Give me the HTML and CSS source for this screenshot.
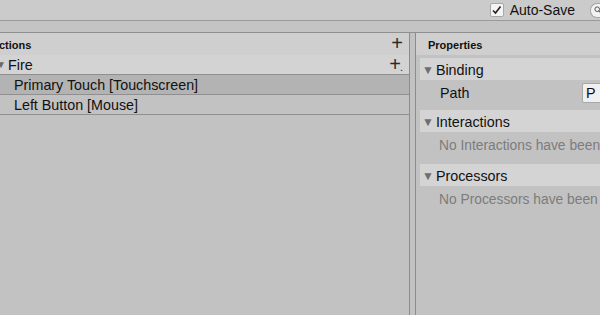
FILE: index.html
```html
<!DOCTYPE html>
<html lang="en">
<head>
  <meta charset="UTF-8" />
  <title>Input Actions</title>
  <link rel="stylesheet" href="styles.css">
</head>
<body>
  <div class="toolbar">
    <label class="autosave">
      <span class="check">
        <svg width="11" height="11" viewBox="0 0 11 11"><path d="M2 5.5 L4.5 8 L9.5 1.5" fill="none" stroke="#222" stroke-width="1.6"/></svg>
      </span>
      Auto-Save
    </label>
    <div class="search">
      <svg width="8" height="8" viewBox="0 0 8 8"><circle cx="3.2" cy="3.2" r="2.3" fill="none" stroke="#555" stroke-width="1"/><path d="M5 5 L7 7" stroke="#555" stroke-width="1.2"/></svg>
    </div>
  </div>
  <div class="strip"></div>

  <div class="main">
    <div class="actions-panel">
      <div class="panel-header">
        <span class="title shifted">Actions</span>
        <span class="plus">+</span>
      </div>
      <div class="action-row">
        <span class="fold">&#9660;</span>
        <span class="name">Fire</span>
        <span class="plus">+<small>.</small></span>
      </div>
      <div class="binding-row selected">Primary Touch [Touchscreen]</div>
      <div class="binding-row">Left Button [Mouse]</div>
    </div>

    <div class="splitter"></div>

    <div class="props-panel">
      <div class="panel-header">
        <span class="title">Properties</span>
      </div>
      <div class="foldout">
        <span class="fold">&#9660;</span> Binding
      </div>
      <div class="prop-row">
        <span class="prop-label">Path</span>
        <span class="prop-field">P</span>
      </div>
      <div class="foldout">
        <span class="fold">&#9660;</span> Interactions
      </div>
      <div class="hint">No Interactions have been added.</div>
      <div class="foldout">
        <span class="fold">&#9660;</span> Processors
      </div>
      <div class="hint">No Processors have been added.</div>
    </div>
  </div>
</body>
</html>
```

FILE: styles.css
```css
body {
  margin: 0;
  width: 600px;
  height: 315px;
  overflow: hidden;
  background: #c2c2c2;
  font-family: "Liberation Sans", Arial, sans-serif;
  font-size: 13px;
  color: #111;
}

.toolbar {
  height: 20px;
  background: #cbcbcb;
  border-bottom: 1px solid #9a9a9a;
  display: flex;
  align-items: center;
  justify-content: flex-end;
  white-space: nowrap;
}

.autosave {
  display: flex;
  align-items: center;
  gap: 6px;
  font-size: 14px;
  margin-right: 15px;
}

.check {
  width: 12px;
  height: 12px;
  background: #f4f4f4;
  border: 1px solid #a8a8a8;
  border-radius: 2px;
  display: flex;
  align-items: center;
  justify-content: center;
}

.search {
  width: 20px;
  height: 13px;
  background: #f2f2f2;
  border: 1px solid #a4a4a4;
  border-right: none;
  border-radius: 7px 0 0 7px;
  display: flex;
  align-items: center;
  padding-left: 3px;
  margin-right: -14px;
}

.strip {
  height: 11px;
  background: #c4c4c4;
  border-bottom: 1px solid #8f8f8f;
}

.main {
  display: flex;
  height: 283px;
}

.actions-panel {
  width: 409px;
  border-right: 1px solid #8c8c8c;
  overflow: hidden;
}

.splitter {
  width: 5px;
  border-right: 1px solid #8c8c8c;
}

.props-panel {
  flex: 1;
  overflow: hidden;
  white-space: nowrap;
}

.panel-header {
  height: 22px;
  background: #cfcfcf;
  display: flex;
  align-items: center;
  justify-content: space-between;
  padding: 0 6px 0 12px;
}

.title {
  font-size: 11px;
  font-weight: bold;
  margin-top: 2px;
}

.title.shifted {
  margin-left: -21px;
}

.plus {
  font-size: 20px;
  line-height: 1;
  color: #2a2a2a;
  margin-top: -2px;
}

.plus small {
  font-size: 11px;
  margin-left: -1px;
}

.action-row {
  height: 19px;
  background: #d3d3d3;
  border-bottom: 1px solid #8f8f8f;
  display: flex;
  align-items: center;
  padding-right: 6px;
  font-size: 14.3px;
}

.action-row .fold {
  font-size: 10px;
  color: #6a6a6a;
  margin-left: -4px;
  width: 12px;
}

.action-row .name {
  flex: 1;
}

.binding-row {
  height: 19px;
  line-height: 20px;
  padding-left: 14px;
  border-bottom: 1px solid #8f8f8f;
  font-size: 14.3px;
  white-space: nowrap;
}

.binding-row.selected {
  background: #b3b3b3;
}

.foldout {
  height: 21px;
  margin: 3px 0 0 4px;
  background: #d4d4d4;
  display: flex;
  align-items: center;
  gap: 2px;
  font-size: 14.3px;
  padding: 1px 0 0 2px;
}

.foldout .fold {
  font-size: 12px;
  color: #6e6e6e;
}

.prop-row {
  height: 24px;
  margin: 1px 0 5px;
  display: flex;
  align-items: center;
  justify-content: space-between;
  padding-left: 24px;
  font-size: 14.3px;
}

.prop-field {
  width: 14px;
  height: 18px;
  line-height: 18px;
  background: #f0f0f0;
  border: 1px solid #a8a8a8;
  border-right: none;
  padding-left: 3px;
  border-radius: 2px 0 0 2px;
}

.hint {
  height: 24px;
  line-height: 24px;
  padding-top: 2px;
  padding-left: 23px;
  color: #7c7c7c;
  font-size: 13.8px;
  margin-bottom: 6px;
}
```
